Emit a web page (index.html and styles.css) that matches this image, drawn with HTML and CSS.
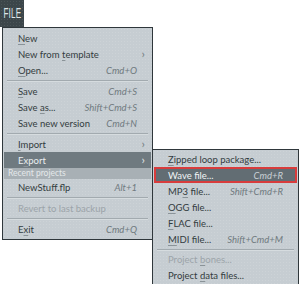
FILE: index.html
```html
<!DOCTYPE html>
<html>
<head>
<meta charset="utf-8">
<link rel="stylesheet" href="styles.css">
</head>
<body>
<div class="bar">
  <div class="file-btn"><span class="file-text">FILE</span></div>
</div>
<div class="menu main-menu">
  <div class="item"><span class="label"><u>N</u>ew</span></div>
  <div class="item"><span class="label">New from <u>t</u>emplate</span><span class="arrow">›</span></div>
  <div class="item"><span class="label"><u>O</u>pen...</span><span class="key">Cmd+O</span></div>
  <div class="sep"></div>
  <div class="item"><span class="label"><u>S</u>ave</span><span class="key">Cmd+S</span></div>
  <div class="item"><span class="label">Save <u>a</u>s...</span><span class="key">Shift+Cmd+S</span></div>
  <div class="item"><span class="label">Save new version</span><span class="key">Cmd+N</span></div>
  <div class="sep"></div>
  <div class="item"><span class="label"><u>I</u>mport</span><span class="arrow">›</span></div>
  <div class="item active"><span class="label">E<u>x</u>port</span><span class="arrow">›</span></div>
  <div class="header">Recent projects</div>
  <div class="item"><span class="label">NewStuff.flp</span><span class="key">Alt+1</span></div>
  <div class="sep"></div>
  <div class="item disabled"><span class="label">Revert to last backup</span></div>
  <div class="sep"></div>
  <div class="item"><span class="label">E<u>x</u>it</span><span class="key">Cmd+Q</span></div>
</div>
<div class="menu sub-menu">
  <div class="item"><span class="label"><u>Z</u>ipped loop package...</span></div>
  <div class="item selected"><span class="label"><u>W</u>ave file...</span><span class="key">Cmd+R</span></div>
  <div class="item"><span class="label">MP<u>3</u> file...</span><span class="key">Shift+Cmd+R</span></div>
  <div class="item"><span class="label"><u>O</u>GG file...</span></div>
  <div class="item"><span class="label"><u>F</u>LAC file...</span></div>
  <div class="item"><span class="label"><u>M</u>IDI file...</span><span class="key">Shift+Cmd+M</span></div>
  <div class="sep"></div>
  <div class="item disabled"><span class="label">Project <u>b</u>ones...</span></div>
  <div class="item"><span class="label">Project <u>d</u>ata files...</span></div>
</div>
</body>
</html>
```
FILE: styles.css
```css
html, body {
  margin: 0;
  padding: 0;
  background: #ffffff;
}
body {
  width: 300px;
  height: 284px;
  position: relative;
  overflow: hidden;
  font-family: Lato, "Noto Sans", sans-serif;
}
.bar {
  display: flex;
}
.file-btn {
  width: 24px;
  height: 27px;
  box-sizing: border-box;
  background-color: #3c464a;
  background-image: radial-gradient(rgba(255,255,255,0.08) 0.6px, transparent 0.8px);
  background-size: 3px 3px;
  color: #dfe5e8;
  display: flex;
  align-items: center;
  justify-content: center;
  padding-bottom: 1px;
  overflow: hidden;
}
.file-text {
  display: inline-block;
  font-family: "Liberation Sans", sans-serif;
  font-size: 14px;
  letter-spacing: 0.3px;
  transform: scaleX(0.58);
  line-height: 14px;
}
.menu {
  position: absolute;
  box-sizing: border-box;
  background-color: #c6cdd2;
  background-image: radial-gradient(rgba(255,255,255,0.12) 0.5px, transparent 0.8px);
  background-size: 3px 3px;
  border: 1px solid #2f373b;
  display: flex;
  flex-direction: column;
  font-size: 9.5px;
  color: #333c40;
}
.main-menu {
  left: 2px;
  top: 27px;
  width: 151px;
  padding: 2px 1px;
}
.sub-menu {
  left: 152px;
  top: 149px;
  width: 147px;
  padding: 1px 1px;
}
.item {
  height: 16px;
  display: flex;
  align-items: center;
  padding: 0 14px 0 14px;
  box-sizing: border-box;
  white-space: nowrap;
}
.label {
  flex: 1;
}
u {
  text-decoration-color: #8a9398;
  text-underline-offset: 2px;
}
.key {
  font-style: italic;
  color: #707a7f;
  font-size: 9.5px;
}
.arrow {
  font-size: 12px;
  color: #707a80;
  margin-right: -8px;
  line-height: 10px;
}
.item.active {
  background: #6f7a80;
  color: #e9eef0;
}
.item.active .arrow {
  color: #e2e7ea;
}
.item.disabled {
  color: #9ca4a9;
}
.item.selected {
  background: #626d73;
  color: #f1f4f5;
  outline: 2px solid #d83c3c;
  outline-offset: -2px;
}
.item.selected .key {
  color: #c8cfd3;
}
.header {
  height: 11px;
  background: #a8b0b5;
  color: #e4e8ea;
  font-size: 8.5px;
  line-height: 11px;
  padding-left: 4px;
}
.sep {
  height: 5px;
  display: flex;
  align-items: center;
  padding: 0 3px;
}
.sep::before {
  content: "";
  flex: 1;
  height: 1px;
  background: #a2aaaf;
  box-shadow: 0 1px 0 #d6dcdf;
}
.sub-menu .sep {
  height: 4px;
}
```
